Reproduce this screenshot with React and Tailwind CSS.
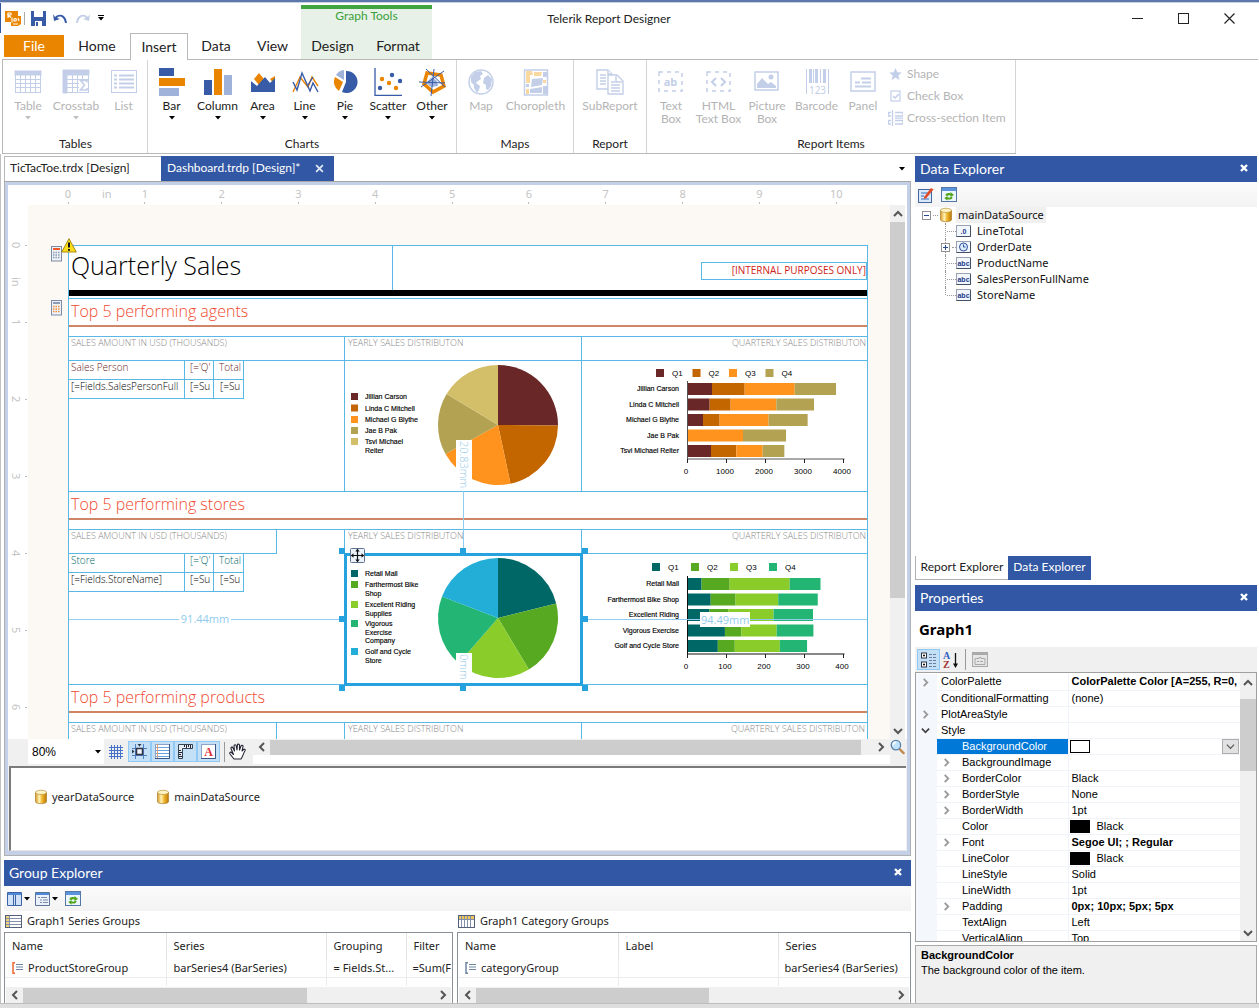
import React from "react";

const UI = "font-['Lato','Noto_Sans',sans-serif]";
const SEGOE = "font-['Noto_Sans',sans-serif]";
const LIGHT = "font-['Open_Sans','Noto_Sans',sans-serif] font-light";
const SANS = "font-['Liberation_Sans',Arial,sans-serif]";

/* ---------- small shared pieces ---------- */

function Caret({ className = "" }) {
  return (
    <svg width="6" height="4" viewBox="0 0 6 4" className={className} fill="currentColor" aria-hidden="true">
      <path d="M0 0h6L3 3.5z" />
    </svg>
  );
}

function Chevron({ dir = "right", className = "text-[#555]", size = 10 }) {
  const d = { right: "M3 1l4 4-4 4", left: "M7 1L3 5l4 4", up: "M1 7l4-4 4 4", down: "M1 3l4 4 4-4" }[dir];
  return (
    <svg width={size} height={size} viewBox="0 0 10 10" fill="none" stroke="currentColor" strokeWidth="2" className={className} aria-hidden="true">
      <path d={d} />
    </svg>
  );
}

function Cylinder({ className = "" }) {
  return (
    <svg width="12" height="16" viewBox="0 0 13 16" className={className} aria-hidden="true">
      <defs>
        <linearGradient id="gold" x1="0" x2="1">
          <stop offset="0" stopColor="#d99a22" />
          <stop offset=".35" stopColor="#fff3b8" />
          <stop offset=".6" stopColor="#f0b62c" />
          <stop offset="1" stopColor="#bb7808" />
        </linearGradient>
      </defs>
      <path d="M.5 3v10c0 3 12 3 12 0V3z" fill="url(#gold)" stroke="#a47620" strokeWidth=".7" />
      <ellipse cx="6.5" cy="3" rx="6" ry="2.3" fill="#fdf3c4" stroke="#b78a30" strokeWidth=".7" />
    </svg>
  );
}

function RefreshWindow() {
  return (
    <svg width="16" height="15" viewBox="0 0 16 15" aria-hidden="true">
      <rect x=".5" y=".5" width="15" height="14" fill="#eef6fd" stroke="#5577a8" />
      <rect x="1" y="1" width="14" height="3" fill="#5b93dc" />
      <path d="M4.500 8.500c0-2.500 3-3 5-2V5L13 8l-3.500 2V8.600C8 8 7 8.200 6.800 9z" fill="#4fa51c" />
      <path d="M11.500 10c0 2.500-3 3-5 2.200v1.500L3.300 11l3.200-2.100v1.400c1.500.6 2.900.4 3.200-.5z" fill="#4fa51c" />
    </svg>
  );
}

function CloseX({ size = 8, className = "text-white", width = 2.4 }) {
  return (
    <svg width={size} height={size} viewBox="0 0 8 8" stroke="currentColor" strokeWidth={width} className={className} aria-hidden="true">
      <path d="M1 1l6 6M7 1L1 7" />
    </svg>
  );
}

function PanelHeader({ title }) {
  return (
    <header className={`${UI} flex h-[26px] shrink-0 items-center justify-between bg-[#3257a4] pr-[9px] pb-[2px] pl-[5px] text-[14px] text-white`}>
      <h2>{title}</h2>
      <button aria-label={`Close ${title}`}><CloseX /></button>
    </header>
  );
}

/* ---------- ribbon icons ---------- */

const B = "#385ba8";
const O = "#ea8500";
const L = "#9fb2d9";
const D = "#c3cfe8";

const icons = {
  table: (
    <g fill="none" stroke={D}>
      <rect x="1.500" y="3.500" width="25" height="21" />
      <rect x="1" y="3" width="26" height="4" fill={D} />
      <path d="M6.500 7v17M11.500 7v17M16.500 7v17M21.500 7v17M2 11.500h24M2 15.500h24M2 19.500h24" />
    </g>
  ),
  crosstab: (
    <g fill="none" stroke={D}>
      <rect x="1.500" y="2.500" width="25" height="22" />
      <path d="M1 2h26v5H1zM1 7h4v18H1z" fill={D} />
      <path d="M10.500 7v17M15.500 7v17M20.500 7v4M5 11.500h21M5 15.500h12M5 19.500h12" />
      <path d="M25 14.500v-2H18.500l4 4.500-4 5H25v-2" strokeWidth="1.600" />
    </g>
  ),
  list: (
    <g stroke={D} fill="none">
      <rect x="1.500" y="2.500" width="25" height="22" />
      <path d="M4 7.500h3M9 7.500h15M4 11.500h3M9 11.500h15M4 15.500h3M9 15.500h15M4 19.500h3M9 19.500h15" strokeWidth="2" />
    </g>
  ),
  bar: (
    <g>
      <path fill={B} d="M1 0h15v8H1z" />
      <path fill={O} d="M1 10h26v8H1z" />
      <path fill={L} d="M1 20h20v8H1z" />
    </g>
  ),
  column: (
    <g>
      <path fill={B} d="M0 12h8v15H0z" />
      <path fill={O} d="M10 1h8v26h-8z" />
      <path fill={L} d="M20 7h8v20h-8z" />
    </g>
  ),
  area: (
    <g>
      <path fill={O} d="M5 11l5-6 5 6-5 6zM21 11l5-3v9z" />
      <path fill={B} d="M2 13l6 5 8-9 5 6 5-5v14H2z" />
    </g>
  ),
  line: (
    <g fill="none" strokeWidth="1.400">
      <path stroke={O} d="M2 24L9 9l8 10 4-10 6 9" />
      <path stroke={B} d="M2 14l4 8L11 5l8 18 3-8 5 9" />
      <path stroke={B} d="M17 17l5-8" />
    </g>
  ),
  pie: (
    <g>
      <path fill={B} d="M15 3a11 11 0 11-4 21L15 14z" />
      <path fill={L} d="M13 2v10L5 7a11 11 0 018-5z" />
      <path fill={O} d="M4 9l8 5-4 9A11 11 0 014 9z" />
    </g>
  ),
  scatter: (
    <g>
      <path d="M1 0v27.500h27" fill="none" stroke={B} strokeWidth="1.300" />
      <g fill={B}><circle cx="18" cy="7" r="2.200" /><circle cx="6" cy="20" r="2.200" /><circle cx="26" cy="13" r="2.200" /></g>
      <g fill={O}><circle cx="8" cy="11" r="2.200" /><circle cx="15" cy="15" r="2.200" /><circle cx="22" cy="20" r="2.200" /></g>
    </g>
  ),
  other: (
    <g>
      <path fill="none" stroke={O} strokeWidth="3.500" d="M9 5l14 2 3 11-11 6-9-8z" />
      <path fill={L} d="M14 9l5 4 1 5-7 1-5-4z" />
      <path stroke={B} fill="none" d="M8 1l19 18M26 3L3 19M1 14l26 1M13 28l3-27" />
    </g>
  ),
  map: (
    <g>
      <circle cx="14" cy="14" r="12" fill="#fff" stroke={D} strokeWidth="1.500" />
      <path fill={D} d="M4 9l4-5 6-1 2 3-3 2 1 3-3 2-2 2 4 3-1 4-2 3-3-5v-3l-3-3zM17 10l4-3 4 4-1 7-3 4-2-1v-4l-3-2z" />
    </g>
  ),
  choropleth: (
    <g>
      <rect x="2.500" y="2" width="23" height="25" fill="#fff" stroke={D} strokeWidth="1.500" />
      <path fill="#f9d9a0" d="M4 3h6l1 4H8v8H4zM12 4h8l-1 4h-7zM4 21h3v5H4zM21 12h3v3h-3z" />
      <path fill={D} d="M10 11l11-1-1 7-11 2zM8 21l12-2v6H8zM21 4h4v5h-4zM21 18h4v8h-4zM4 16h3v3H4z" />
    </g>
  ),
  subreport: (
    <g fill="#fff" stroke={D} strokeWidth="1.400">
      <path d="M1 2h11l4 4v15H1z" />
      <path d="M12 2v4h4M4 7h6M4 10h6M4 13h6M4 16h6" />
      <path d="M12 7h9l6 6v13H12z" />
      <path d="M20 8v6h6M15 14h4M15 17h9M15 20h9M15 23h9" />
    </g>
  ),
  textbox: (
    <g>
      <rect x="2" y="4" width="23" height="19" fill="none" stroke={D} strokeWidth="1.500" strokeDasharray="4 4" />
      <text x="13.500" y="18" textAnchor="middle" fontSize="11" fontWeight="700" fill={D} fontFamily="Noto Sans">ab</text>
    </g>
  ),
  html: (
    <g fill="none" stroke={D}>
      <rect x="2" y="4" width="23" height="19" strokeWidth="1.500" strokeDasharray="4 4" />
      <path strokeWidth="2" d="M11 10l-4 4 4 4M16 10l4 4-4 4" />
    </g>
  ),
  picture: (
    <g fill={D}>
      <rect x="2" y="4" width="23" height="18" fill="#fff" stroke={D} strokeWidth="1.500" />
      <path d="M4 20v-4l5-6 6 6 3-2 5 4v2z" />
      <circle cx="18" cy="9" r="2.500" />
    </g>
  ),
  barcode: (
    <g fill={D}>
      <path d="M3 1h1v25H3zM6 1h3v14H6zM10 1h1v14h-1zM12 1h3v14h-3zM17 1h1v14h-1zM20 1h3v14h-3zM25 1h1v25h-1z" />
      <text x="14.500" y="26" textAnchor="middle" fontSize="10" fontFamily="Noto Sans">123</text>
    </g>
  ),
  panel: (
    <g fill="none" stroke={D}>
      <rect x="2" y="4" width="24" height="19" strokeWidth="1.500" />
      <path strokeWidth="2" d="M12 10.500h10M6 14.500h5M13 14.500h9M6 18.500h16" />
    </g>
  ),
};

function RibbonItem({ icon, label, width, caret, disabled }) {
  return (
    <button
      disabled={disabled}
      className={`${width} flex shrink-0 flex-col items-center text-[12px] leading-[13px] ${disabled ? "text-[#b4b4b4]" : "text-[#222]"}`}
    >
      <svg width="28" height="28" viewBox="0 0 28 28" aria-hidden="true">{icons[icon]}</svg>
      <span className="mt-[3px] whitespace-pre-line">{label}</span>
      {caret && <Caret className={`mt-[4px] ${disabled ? "text-[#c0c0c0]" : "text-black"}`} />}
    </button>
  );
}

function RibbonGroup({ title, children, className = "" }) {
  return (
    <section className={`flex flex-col border-r border-[#d4d4d4] ${className}`}>
      <div className="flex grow pt-[8px]">{children}</div>
      <h3 className="pb-[2px] text-center text-[12px] leading-[14px] text-[#222]">{title}</h3>
    </section>
  );
}

function Ribbon() {
  return (
    <div className={`${UI} mr-[1px] ml-[2px] flex h-[95px] shrink-0 border-t border-l border-[#b8b8b8]`}>
      <div className="flex border-b border-[#b8b8b8]">
        <RibbonGroup title="Tables" className="w-[145px] pl-px">
          <RibbonItem icon="table" label="Table" width="w-[48px]" caret disabled />
          <RibbonItem icon="crosstab" label="Crosstab" width="w-[48px]" caret disabled />
          <RibbonItem icon="list" label="List" width="w-[47px]" disabled />
        </RibbonGroup>
        <RibbonGroup title="Charts" className="w-[309px]">
          <RibbonItem icon="bar" label="Bar" width="w-[47px]" caret />
          <RibbonItem icon="column" label="Column" width="w-[45px]" caret />
          <RibbonItem icon="area" label="Area" width="w-[45px]" caret />
          <RibbonItem icon="line" label="Line" width="w-[39px]" caret />
          <RibbonItem icon="pie" label="Pie" width="w-[42px]" caret />
          <RibbonItem icon="scatter" label="Scatter" width="w-[44px]" caret />
          <RibbonItem icon="other" label="Other" width="w-[44px]" caret />
        </RibbonGroup>
        <RibbonGroup title="Maps" className="w-[117px]">
          <RibbonItem icon="map" label="Map" width="w-[48px]" disabled />
          <RibbonItem icon="choropleth" label="Choropleth" width="w-[61px]" disabled />
        </RibbonGroup>
        <RibbonGroup title="Report" className="w-[73px]">
          <RibbonItem icon="subreport" label="SubReport" width="w-[72px]" disabled />
        </RibbonGroup>
        <RibbonGroup title="Report Items" className="w-[369px]">
          <RibbonItem icon="textbox" label={"Text\nBox"} width="w-[48px]" disabled />
          <RibbonItem icon="html" label={"HTML\nText Box"} width="w-[47px]" disabled />
          <RibbonItem icon="picture" label={"Picture\nBox"} width="w-[50px]" disabled />
          <RibbonItem icon="barcode" label="Barcode" width="w-[49px]" disabled />
          <RibbonItem icon="panel" label="Panel" width="w-[44px]" disabled />
          <div className="-mt-[2px] flex flex-col gap-[6px] pl-[3px] text-[12px] text-[#b4b4b4]">
            <button disabled className="flex h-[16px] items-center gap-[4px]">
              <svg width="15" height="14" viewBox="0 0 15 14" fill={D} aria-hidden="true"><path d="M7.500 1l1.800 4.300 4.500.3-3.500 3 1.200 4.400-4-2.400-4 2.400 1.200-4.400-3.500-3 4.500-.3z" /></svg>
              Shape
            </button>
            <button disabled className="flex h-[16px] items-center gap-[4px]">
              <svg width="15" height="12" viewBox="0 0 15 12" fill="none" stroke={D} aria-hidden="true"><rect x="3" y="1" width="9" height="10" strokeWidth="1.200" /><path strokeWidth="1.500" d="M5 6l2 2 4-4" /></svg>
              Check Box
            </button>
            <button disabled className="flex h-[16px] items-center gap-[4px]">
              <svg width="15" height="16" viewBox="0 0 15 16" fill="none" stroke={D} strokeWidth="1.300" aria-hidden="true"><path d="M4.500 0v16M3 2.500H.5V6H3M3 10.500H.5V14H3M7 2.500h8V6H7M7 10.500h8V14H7M7 8.200h8" /></svg>
              Cross-section Item
            </button>
          </div>
        </RibbonGroup>
      </div>
    </div>
  );
}

function TitleBar() {
  const tab = "flex h-[26px] items-center justify-center pb-[2px] text-[14px] text-[#222]";
  return (
    <div className={`${UI} relative flex shrink-0 flex-col`}>
      <div className="flex h-[30px] items-center border-l border-[#3257a4] pl-[4px]">
        <svg width="17" height="17" viewBox="0 0 17 17" aria-hidden="true">
          <path fill={O} d="M0 1h13v5h3v8l-3 2H6v-4H0z" />
          <path fill="none" stroke="#fff" strokeWidth="1.100" d="M3 8V3h2.500c1 0 1 2 0 2H3l3 2.500M7 7.500v5M9 11v-2c2-1 3 0 2 2zM13 8l1 3M8 14h5" />
        </svg>
        <span className="mx-[2px] h-[13px] w-px bg-[#aaa]" />
        <button aria-label="Save" className="ml-[4px]">
          <svg width="15" height="15" viewBox="0 0 15 15" aria-hidden="true">
            <path fill={B} d="M0 0h15v15H0z" /><path fill="#fff" d="M3 0h9v6H3zM4 10h7v5H4z" /><path fill={B} d="M5 11h2v4H5z" />
          </svg>
        </button>
        <button aria-label="Undo" className="ml-[7px]">
          <svg width="15" height="11" viewBox="0 0 15 11" aria-hidden="true"><path fill={B} d="M0 1l1 7 6-2-3-1c3-3 7-1 8 5h2C13 1 6 0 2 4z" /></svg>
        </button>
        <button aria-label="Redo" className="ml-[7px]">
          <svg width="15" height="11" viewBox="0 0 15 11" aria-hidden="true"><path fill={D} d="M15 1l-1 7-6-2 3-1C8 2 4 4 3 10H1C2 1 9 0 13 4z" /></svg>
        </button>
        <button aria-label="Customize quick access toolbar" className="ml-[8px] flex flex-col items-center gap-[1px]">
          <span className="h-px w-[6px] bg-black" />
          <Caret />
        </button>
        <h1 className="absolute inset-x-0 top-[9px] pr-[41px] text-center text-[12px] leading-[14px] text-[#222]">Telerik Report Designer</h1>
        <div className="ml-auto flex items-center gap-[35px] pr-[24px]">
          <button aria-label="Minimize"><svg width="11" height="11" aria-hidden="true"><path d="M0 5.500h11" stroke="#222" /></svg></button>
          <button aria-label="Maximize"><svg width="11" height="11" fill="none" aria-hidden="true"><rect x=".5" y=".5" width="10" height="10" stroke="#222" /></svg></button>
          <button aria-label="Close"><svg width="11" height="11" aria-hidden="true"><path d="M.5.5l10 10M10.500.5l-10 10" stroke="#222" strokeWidth="1.200" /></svg></button>
        </div>
      </div>
      <nav className="flex items-end pl-[4px]">
        <button className="mb-[2px] flex h-[22px] w-[60px] items-center justify-center bg-[#ea8500] pb-[2px] text-[14px] text-white">File</button>
        <button className={`${tab} w-[66px]`}>Home</button>
        <button className={`${tab} -mb-px h-[27px] w-[58px] border border-b-0 border-[#b8b8b8] bg-white`}>Insert</button>
        <button className={`${tab} w-[56px]`}>Data</button>
        <button className={`${tab} w-[57px]`}>View</button>
        <div className="-mt-[28px] flex w-[131px] flex-col border-t-4 border-[#40a540] bg-[#e7f1e7]">
          <span className="h-[24px] text-center text-[12px] leading-[14px] text-[#3a9f3a]">Graph Tools</span>
          <div className="flex">
            <button className={`${tab} w-[63px]`}>Design</button>
            <button className={`${tab} w-[68px]`}>Format</button>
          </div>
        </div>
      </nav>
    </div>
  );
}

/* ---------- charts ---------- */

const WARM = ["#692727", "#c46600", "#ff931e", "#b2a252", "#d3bf69"];
const FRESH = ["#006767", "#58a922", "#8acc2a", "#22b573", "#22aed6"];

function slice(cx, cy, r, a, b) {
  const p = (t) => {
    const rad = ((t - 90) * Math.PI) / 180;
    return `${cx + r * Math.cos(rad)} ${cy + r * Math.sin(rad)}`;
  };
  return `M${cx} ${cy}L${p(a)}A${r} ${r} 0 ${b - a > 180 ? 1 : 0} 1 ${p(b)}Z`;
}

function PieChart({ angles, colors, legend, label, labelTop, labelHeight }) {
  return (
    <svg width="236" height="130" viewBox="0 0 236 130" className={`${SANS} block`} role="img" aria-label={label}>
      {colors.map((c, i) => (
        <path key={c} d={slice(153, 64, 60, angles[i], angles[i + 1])} fill={c} />
      ))}
      {legend.map(([y, ...lines], i) => (
        <g key={i} fontSize="7" fill="#000" stroke="#000" strokeWidth=".15">
          <rect x="6" y={y - 4} width="7" height="7" fill={colors[i]} stroke="none" />
          {lines.map((t, j) => <text key={t} x="20" y={y + 2 + j * 8.5}>{t}</text>)}
        </g>
      ))}
      <rect x="111" y={labelTop} width="16" height={labelHeight} fill="#fff" />
      <text className={LIGHT} fontSize="11" fill="#8fc8ea" transform={`translate(115 ${labelTop + 1}) rotate(90)`}>{label}</text>
    </svg>
  );
}

function BarChart({ rows, colors, unit, ticks, legendX, legendGap, legendY, top, axisColor, name }) {
  const base = 105;
  const first = top + 12;
  return (
    <svg width="286" height="130" viewBox="0 0 286 130" className={`${SANS} block`} role="img" aria-label={name}>
      {colors.map((c, i) => (
        <g key={c}>
          <rect x={legendX + i * legendGap} y={legendY - 4} width="8" height="8" fill={c} />
          <text x={legendX + 16 + i * legendGap} y={legendY + 3} fontSize="8">{`Q${i + 1}`}</text>
        </g>
      ))}
      {rows.map(([label, ...vals], r) => {
        let x = base;
        const y = first + r * 15.5;
        return (
          <g key={label}>
            <text x="97" y={y + 8} textAnchor="end" fontSize="7" stroke="#000" strokeWidth=".15">{label}</text>
            {vals.map((v, i) => {
              const at = x;
              x += v * unit;
              return <rect key={i} x={at} y={y} width={v * unit} height="12" fill={colors[i]} />;
            })}
          </g>
        );
      })}
      <path d={`M${base + 0.5} ${first - 2}v78h157`} fill="none" stroke={axisColor} />
      {ticks.map((t, i) => (
        <g key={t}>
          <path d={`M${base + 0.5 + i * 39} ${first + 76}v4`} stroke="#222" />
          <text x={base - 1 + i * 39} y={first + 91} textAnchor="middle" fontSize="8">{t}</text>
        </g>
      ))}
    </svg>
  );
}

/* ---------- report surface ---------- */

const LINE = "border-[#5ab8e6]";

function FieldTable({ head, field, tone }) {
  const cell = `border ${LINE} whitespace-nowrap p-0 h-[19px] align-top leading-[13px] font-light`;
  return (
    <table className={`-mt-px -ml-px w-[176px] table-fixed border-collapse text-[10px] ${LIGHT}`}>
      <tbody>
        <tr className={tone}>
          <th className={`${cell} w-[116px] pl-[2px] text-left`}>{head}</th>
          <th className={`${cell} w-[29px] pl-[5px] text-left`}>[='Q'</th>
          <th className={`${cell} w-[30px] pl-[5px] text-left`}>Total</th>
        </tr>
        <tr className="text-black">
          <td className={`${cell} pl-[2px]`}>{field}</td>
          <td className={`${cell} pl-[5px]`}>[=Su</td>
          <td className={`${cell} pl-[6px]`}>[=Su</td>
        </tr>
      </tbody>
    </table>
  );
}

function ReportSection({ title, narrow, table, pie, bars }) {
  const caption = `h-[24px] border-b ${LINE} text-[9px] leading-[12px] text-[#888]`;
  return (
    <section className={`border-t ${LINE}`}>
      <div className="h-[37px]">
        <h3 className="h-[28px] border-b-2 border-[#cf8666] pl-[2px] text-[16px] leading-[25px] text-[#f04a30]">{title}</h3>
      </div>
      <div className={`grid grid-cols-[276px_237px_1fr] border-t ${LINE}`}>
        <div className={`h-[154px] border-r ${LINE}`}>
          <div className={`${caption} pl-[2px] ${narrow ? "w-[208px] border-r" : ""}`}>SALES AMOUNT IN USD (THOUSANDS)</div>
          {table}
        </div>
        <div className={`h-[154px] border-r ${LINE}`}>
          <div className={`${caption} pl-[3px]`}>YEARLY SALES DISTRIBUTON</div>
          {pie}
        </div>
        <div className="h-[154px]">
          <div className={`${caption} pr-[2px] text-right`}>QUARTERLY SALES DISTRIBUTON</div>
          {bars}
        </div>
      </div>
    </section>
  );
}

function CalcIcon({ tone, className }) {
  return (
    <svg width="11" height="16" viewBox="0 0 11 16" className={className} aria-hidden="true">
      <rect x=".5" y=".5" width="10" height="14.500" fill="#eef2f9" stroke="#7c8aa5" />
      <rect x="2" y="2" width="7" height="2" fill={tone} />
      <path d="M2 6.500h7M2 9h7M2 11.500h7" stroke={tone === "#ef5a28" ? "#8d9bb5" : "#f2913d"} strokeWidth="1.500" strokeDasharray="1.500 1" />
    </svg>
  );
}

const HANDLES = [
  "-top-[8px] -left-[8px]", "-top-[8px] left-[113px]", "-top-[8px] -right-[8px]",
  "top-[60px] -left-[8px]", "top-[60px] -right-[8px]",
  "-bottom-[8px] -left-[8px]", "-bottom-[8px] left-[113px]", "-bottom-[8px] -right-[8px]",
];

function SelectionOverlay() {
  return (
    <>
      <div className="absolute top-[245px] left-[394px] h-[58px] w-px bg-[#8fcdee]" />
      <div className="absolute top-[367px] left-0 flex w-[272px] items-center">
        <span className="h-px grow bg-[#8fcdee]" />
        <span className="px-[2px] text-[11px] leading-[12px] font-normal text-[#8fcbee]">91.44mm</span>
        <span className="h-px grow bg-[#8fcdee]" />
      </div>
      <div className="absolute top-[366px] right-0 flex h-[15px] w-[282px] items-center">
        <span className="h-px w-[115px] bg-[#8fcdee]" />
        <span className="bg-white px-[1px] text-[11px] leading-[15px] font-normal text-[#8fcbee]">94.49mm</span>
        <span className="h-px grow bg-[#8fcdee]" />
      </div>
      <div className="absolute top-[307px] left-[275px] h-[133px] w-[239px] border-3 border-[#28a2de]">
        {HANDLES.map((h) => <span key={h} className={`absolute size-[6px] bg-[#28a2de] ${h}`} />)}
        <svg width="15" height="15" viewBox="0 0 15 15" className="absolute -top-[8px] left-[3px]" aria-hidden="true">
          <rect x=".5" y=".5" width="14" height="14" rx="1" fill="#eef3fb" stroke="#5e7390" />
          <path d="M7.500 1.500v12M1.500 7.500h12" stroke="#111" strokeWidth="1.200" />
          <path d="M7.500.8l2.200 2.700H5.300zM7.500 14.200l2.200-2.700H5.300zM.8 7.500l2.700-2.200v4.400zM14.200 7.500l-2.700-2.200v4.400z" fill="#111" />
        </svg>
      </div>
    </>
  );
}

function ReportPage() {
  return (
    <div className={`${LIGHT} relative ml-[40px] mt-[40px] w-[800px] border-x border-t ${LINE} bg-white`}>
      <CalcIcon tone="#ef5a28" className="absolute top-0 -left-[18px]" />
      <CalcIcon tone="#8d9bb5" className="absolute top-[54px] -left-[18px]" />
      <svg width="16" height="15" viewBox="0 0 16 15" className="absolute -top-[8px] -left-[8px]" aria-hidden="true">
        <path d="M8 .7L15.300 14H.7z" fill="#fbdc1e" stroke="#a58a10" strokeLinejoin="round" />
        <path d="M8 4.500v5M8 11v1.800" stroke="#111" strokeWidth="2" />
      </svg>
      <div className="flex h-[44px] items-start justify-between">
        <h2 className={`h-full w-[324px] border-r ${LINE} pl-[2px] text-[25px] leading-[38px] text-black`}>Quarterly Sales</h2>
        <div className={`mt-[16px] h-[18px] w-[166px] border ${LINE} text-right text-[10px] leading-[14px] font-normal text-[#cf2318]`}>[INTERNAL PURPOSES ONLY]</div>
      </div>
      <div className="mb-[2px] h-[6px] bg-black" />
      <ReportSection
        title="Top 5 performing agents"
        table={<FieldTable head="Sales Person" field="[=Fields.SalesPersonFull" tone="text-[#692727]" />}
        pie={
          <PieChart
            label="20.83mm"
            labelTop={79}
            labelHeight={45}
            colors={WARM}
            angles={[0, 90.5, 168, 241, 301, 360]}
            legend={[[36, "Jillian Carson"], [47.5, "Linda C Mitchell"], [59, "Michael G Blythe"], [70, "Jae B Pak"], [81, "Tsvi Michael", "Reiter"]]}
          />
        }
        bars={
          <BarChart
            name="Quarterly sales by agent"
            colors={WARM.slice(0, 4)}
            unit={0.039}
            ticks={[0, 1000, 2000, 3000, 4000]}
            legendX={74}
            legendGap={36.5}
            legendY={12}
            top={10}
            axisColor="#555"
            rows={[
              ["Jillian Carson", 641, 838, 1282, 1060],
              ["Linda C Mitchell", 581, 538, 1171, 966],
              ["Michael G Blythe", 410, 427, 1256, 1000],
              ["Jae B Pak", 0, 0, 1436, 1103],
              ["Tsvi Michael Reiter", 615, 650, 675, 556],
            ]}
          />
        }
      />
      <ReportSection
        title="Top 5 performing stores"
        narrow
        table={<FieldTable head="Store" field="[=Fields.StoreName]" tone="text-[#006767]" />}
        pie={
          <PieChart
            label="0mm"
            labelTop={99}
            labelHeight={27}
            colors={FRESH}
            angles={[0, 76, 149, 221, 291, 360]}
            legend={[[20, "Retail Mall"], [31, "Farthermost Bike", "Shop"], [51, "Excellent Riding", "Supplies"], [70, "Vigorous", "Exercise", "Company"], [98, "Golf and Cycle", "Store"]]}
          />
        }
        bars={
          <BarChart
            name="Quarterly sales by store"
            colors={FRESH.slice(0, 4)}
            unit={0.395}
            ticks={[0, 100, 200, 300, 400]}
            legendX={70}
            legendGap={39}
            legendY={13}
            top={12}
            axisColor="#111"
            rows={[
              ["Retail Mall", 37, 71, 152, 78],
              ["Farthermost Bike Shop", 60, 63, 108, 100],
              ["Excellent Riding", 57, 48, 114, 100],
              ["Vigorous Exercise", 96, 42, 89, 93],
              ["Golf and Cycle Store", 78, 43, 114, 69],
            ]}
          />
        }
      />
      <ReportSection title="Top 5 performing products" narrow />
      <SelectionOverlay />
    </div>
  );
}

function RulerTop() {
  return (
    <div className={`${SEGOE} h-[20px] shrink-0 overflow-hidden pl-[60px] text-[11px] text-[#c4c4c4]`}>
      <div className="grid w-[845px] grid-cols-11">
        {[0, 1, 2, 3, 4, 5, 6, 7, 8, 9, 10].map((n) => (
          <div key={n} className="flex">
            <div className="flex w-[16px] -translate-x-1/2 flex-col items-center">
              <span className="h-[17px] leading-[18px]">{n}</span>
              <span className="h-[2px] w-px bg-[#bbb]" />
            </div>
            {n === 0 && <span className="ml-[18px] leading-[18px]">in</span>}
          </div>
        ))}
      </div>
    </div>
  );
}

function RulerLeft() {
  return (
    <div className={`${SEGOE} w-[20px] shrink-0 overflow-hidden pt-[40px] text-[11px] text-[#c4c4c4]`}>
      {[0, 1, 2, 3, 4, 5, 6].map((n) => (
        <div key={n} className="flex h-[77px] flex-col">
          <div className="flex h-[16px] -translate-y-1/2 items-center">
            <span className="w-[17px] leading-[18px] [writing-mode:vertical-rl]">{n}</span>
            <span className="h-px w-[2px] bg-[#bbb]" />
          </div>
          {n === 0 && <span className="mt-[16px] w-[17px] leading-[18px] [writing-mode:vertical-rl]">in</span>}
        </div>
      ))}
    </div>
  );
}

function CanvasToolbar() {
  const on = "flex h-[21px] w-[23px] items-center justify-center border border-[#90c8f6] bg-[#c3e0f7]";
  return (
    <div className="flex h-[26px] shrink-0 items-start bg-[#f0f0f0] pl-[20px]">
      <div className={`${SANS} flex h-[25px] w-[76px] items-center bg-white pr-[3px] text-[12px]`}>
        <select aria-label="Zoom" defaultValue="80%" className="h-[24px] grow appearance-none bg-transparent pl-[4px] leading-[24px] outline-none">
          <option>80%</option>
        </select>
        <Caret />
      </div>
      <div className="flex grow items-center pt-[2px] pl-[5px]">
        <button aria-label="Show grid" className="w-[19px]">
          <svg width="14" height="14" viewBox="0 0 14 14" stroke="#4472c4" aria-hidden="true"><path d="M2.500 0v14M5.500 0v14M8.500 0v14M11.500 0v14M0 2.500h14M0 5.500h14M0 8.500h14M0 11.500h14" /></svg>
        </button>
        <button aria-label="Snap to grid" className={on}>
          <svg width="15" height="15" viewBox="0 0 15 15" fill="none" aria-hidden="true"><path d="M3.500 0v15M11.500 0v15M0 4.500h15M0 11.500h15" stroke="#4f7fc4" /><rect x="4.500" y="4.500" width="6" height="6" fill="#eef5fc" stroke="#334" strokeWidth="1.500" /><path d="M5.500 0h4l-2 2.500zM0 5.500v4l2.500-2z" fill="#334" /></svg>
        </button>
        <button aria-label="Snap lines" className={on}>
          <svg width="15" height="15" viewBox="0 0 15 15" aria-hidden="true"><rect x=".5" y=".5" width="14" height="14" fill="#fff" stroke="#8ba3c8" /><path d="M1 3.500h13M1 6.500h13M1 9.500h13M1 12.500h13" stroke="#6aa2dc" /><path d="M2.500 0v15" stroke="#e8a070" /><path d="M14.500 0v14.500H0" stroke="#3a5488" fill="none" /></svg>
        </button>
        <button aria-label="Rulers" className={on}>
          <svg width="15" height="15" viewBox="0 0 15 15" aria-hidden="true"><path d="M.5.5h14v4h-10v10h-4z" fill="#e8edf5" stroke="#345" /><path d="M6.500 1v2M8.500 1v3M10.500 1v2M12.500 1v3M1 6.500h2M1 8.500h3M1 10.500h2M1 12.500h3" stroke="#223" /></svg>
        </button>
        <button aria-label="Text preview" className={on}>
          <svg width="15" height="15" viewBox="0 0 15 15" aria-hidden="true"><rect x=".5" y=".5" width="14" height="14" fill="#fff" stroke="#8ba3c8" /><path d="M14.500 0v14.500H0" stroke="#3a5488" fill="none" /><text x="7.500" y="12" textAnchor="middle" fontFamily="Liberation Serif" fontWeight="700" fontSize="12" fill="#e0303a">A</text></svg>
        </button>
        <span className="mx-[4px] h-[20px] w-px bg-[#999]" />
        <button aria-label="Pan">
          <svg width="17" height="17" viewBox="0 0 17 17" fill="#fff" stroke="#223" strokeWidth="1.100" strokeLinejoin="round" aria-hidden="true"><path d="M5 16l-4-5c-1-2 1-2.500 2-1l1.500 1.500L2 5.500C1.600 4 3.500 3.500 4 5l1.500 3L5 3c0-1.600 2-1.600 2.200-.2L8 7l.4-5C8.500.8 10.400.8 10.500 2.200L10.500 7l1.500-4c.5-1.300 2.200-.8 2 .6L13 8l1.500-1.500c1-.9 2.100.1 1.500 1.300C14.500 10 14 13 12 16z" /></svg>
        </button>
      </div>
      <div className="flex h-[25px] w-[637px] flex-col bg-white">
        <div className="flex h-[16px] items-center bg-[#f0f0f0]">
          <span className="flex w-[17px] justify-center"><Chevron dir="left" /></span>
          <span className="h-[15px] grow bg-[#cdcdcd]" />
          <span className="flex w-[29px] justify-end pr-[4px]"><Chevron /></span>
        </div>
      </div>
      <button aria-label="Zoom tool" className="pr-[2px]">
        <svg width="15" height="16" viewBox="0 0 16 16" aria-hidden="true"><path d="M10 10l4.500 4.500" stroke="#c08a50" strokeWidth="2.500" strokeLinecap="round" /><circle cx="6.300" cy="6" r="5" fill="#bfe3fa" stroke="#5c7fa6" strokeWidth="1.400" /><path d="M3.500 6a3 3 0 013-3" stroke="#fff" strokeWidth="1.500" fill="none" /></svg>
      </button>
    </div>
  );
}

function DocumentArea() {
  return (
    <div className="flex min-h-0 grow flex-col">
      <div className={`${UI} flex h-[26px] shrink-0 border-b border-[#a6a6a6] text-[12px]`}>
        <button className="w-[157px] border-t border-l border-[#b8b8b8] pb-[2px] pl-[5px] text-left text-[#222]">TicTacToe.trdx [Design]</button>
        <div className="flex w-[173px] items-center justify-between bg-[#3257a4] pr-[10px] pl-[6px] text-white">
          <button className="pb-[2px]">Dashboard.trdp [Design]*</button>
          <button aria-label="Close Dashboard.trdp"><CloseX size={9} className="text-[#dfe6f5]" width={1.600} /></button>
        </div>
        <button aria-label="Open documents" className="ml-auto pr-[6px]"><Caret /></button>
      </div>
      <div className="flex min-h-0 grow flex-col border border-t-0 border-[#b0b0b0]">
        <div className="flex min-h-0 grow flex-col border-3 border-b-4 border-[#c4cfe8] bg-white">
          <RulerTop />
          <div className="flex min-h-0 grow">
            <RulerLeft />
            <div className="min-w-0 grow overflow-hidden bg-[#fcf8f3]"><ReportPage /></div>
            <div className="flex w-[15px] shrink-0 flex-col items-center bg-[#f0f0f0]">
              <span className="flex h-[17px] items-center"><Chevron dir="up" /></span>
              <span className="w-full grow-[377] bg-[#cdcdcd]" />
              <span className="grow-[124]" />
              <span className="flex h-[17px] items-center"><Chevron dir="down" /></span>
            </div>
            <div className="w-[2px] shrink-0 bg-white" />
          </div>
          <CanvasToolbar />
          <div className="shrink-0 bg-[#f0f0f0] px-[1px] pt-px">
            <ul className={`${SEGOE} flex h-[85px] gap-[23px] border-t-2 border-l-2 border-[#7b7b7b] border-b border-b-[#e4e4e4] bg-white pt-[21px] pl-[24px] text-[11px] text-[#222]`}>
              <li className="flex h-[16px] items-center gap-[5px]"><Cylinder />yearDataSource</li>
              <li className="flex h-[16px] items-center gap-[5px]"><Cylinder />mainDataSource</li>
            </ul>
          </div>
        </div>
      </div>
    </div>
  );
}

/* ---------- group explorer ---------- */

function GroupTable({ grow, title, icon, columns, row, accent, thumb }) {
  return (
    <section className={`${grow} flex min-w-0 flex-col`}>
      <h3 className="flex h-[21px] items-center gap-[5px] text-[11px] text-[#222]">{icon}{title}</h3>
      <div className="flex h-[71px] flex-col overflow-hidden border border-b-0 border-[#8a8f99]">
        <table className="w-full table-fixed border-collapse text-[11px] text-[#222]">
          <thead>
            <tr>
              {columns.map(([name, width]) => (
                <th key={name} className={`${width} h-[26px] border-r border-[#e2e2e2] pl-[7px] text-left font-normal last:border-r-0`}>{name}</th>
              ))}
            </tr>
          </thead>
          <tbody>
            <tr>
              {row.map((v, i) => (
                <td key={i} className="h-[18px] overflow-hidden border-r border-b border-[#ececec] p-0 pl-[7px] leading-[16px] whitespace-nowrap last:border-r-0 last:pl-[6px]">
                  {i === 0 ? (
                    <span className="flex items-center gap-[5px]">
                      <svg width="11" height="12" viewBox="0 0 11 12" fill="none" aria-hidden="true">
                        <path d="M3 .8H1v10.400h2" stroke={accent} strokeWidth="1.500" />
                        <path d="M4 2.500h7M4 5h7M4 7.500h7" stroke="#6d87a3" />
                      </svg>
                      {v}
                    </span>
                  ) : v}
                </td>
              ))}
            </tr>
            <tr>{row.map((_, i) => <td key={i} className="h-[9px] border-r border-[#ececec] last:border-r-0" />)}</tr>
          </tbody>
        </table>
        <div className="mx-px mt-auto flex h-[16px] shrink-0 items-center bg-[#f0f0f0]">
          <span className="flex w-[17px] justify-center"><Chevron dir="left" /></span>
          <span className="grow"><span className={`block h-[15px] bg-[#cdcdcd] ${thumb}`} /></span>
          <span className="flex w-[17px] justify-center"><Chevron /></span>
        </div>
      </div>
    </section>
  );
}

function GroupExplorer() {
  return (
    <section className={`${SEGOE} mt-[4px] shrink-0`}>
      <PanelHeader title="Group Explorer" />
      <div className="flex h-[25px] items-center bg-linear-to-b from-[#fbfbfb] to-[#f3f3f3] pl-[3px]">
        <button aria-label="Add group" className="flex items-center gap-[2px]">
          <svg width="15" height="14" viewBox="0 0 15 14" aria-hidden="true"><path d="M.5.5h14v13H.5z" fill="#cfe2f8" stroke="#3c63a5" /><path d="M1 1h13v2H1z" fill="#4f88d4" /><path d="M6.500 3v11M8.500 3v11" stroke="#3c63a5" /></svg>
          <Caret />
        </button>
        <button aria-label="Group options" className="ml-[5px] flex items-center gap-[2px]">
          <svg width="15" height="14" viewBox="0 0 15 14" aria-hidden="true"><path d="M.5.5h14v13H.5z" fill="#eaf1fa" stroke="#5b7399" /><path d="M1 1h13v2H1z" fill="#4f88d4" /><path d="M3 5.500h2M5 8h2M5 10.500h2M6 5.500h6M8 8h5M8 10.500h5" stroke="#7d8da8" /></svg>
          <Caret />
        </button>
        <button aria-label="Refresh" className="ml-[7px]"><RefreshWindow /></button>
      </div>
      <div className="flex gap-[4px]">
        <GroupTable
          grow="flex-[449]"
          title="Graph1 Series Groups"
          accent="#ee6a35"
          thumb="w-[69%]"
          icon={<svg width="17" height="14" viewBox="0 0 17 14" className="ml-px" aria-hidden="true"><rect x=".5" y=".5" width="16" height="12" fill="#fff" stroke="#55607a" /><path d="M1 1h3v11H1z" fill="#f3d27c" /><path d="M1 3.500h15M1 6.500h15M1 9.500h15M4.500 1v11" stroke="#8390aa" /></svg>}
          columns={[["Name", "w-[161px]"], ["Series", "w-[160px]"], ["Grouping", "w-[80px]"], ["Filter", "w-auto"]]}
          row={["ProductStoreGroup", "barSeries4 (BarSeries)", "= Fields.St...", "=Sum(F"]}
        />
        <GroupTable
          grow="flex-[454]"
          title="Graph1 Category Groups"
          accent="#6d87a3"
          thumb="w-[56%]"
          icon={<svg width="17" height="14" viewBox="0 0 17 14" className="ml-px" aria-hidden="true"><rect x=".5" y=".5" width="16" height="12" fill="#fff" stroke="#55607a" /><path d="M1 1h15v3H1z" fill="#f0c45c" /><path d="M3.500 1v11M6.500 1v11M9.500 1v11M12.500 1v11M1 4.500h15" stroke="#8390aa" /></svg>}
          columns={[["Name", "w-[160px]"], ["Label", "w-[160px]"], ["Series", "w-auto"]]}
          row={["categoryGroup", "", "barSeries4 (BarSeries)"]}
        />
      </div>
    </section>
  );
}

/* ---------- right-hand panels ---------- */

function FieldGlyph({ kind }) {
  return (
    <svg width="15" height="12" viewBox="0 0 15 12" aria-hidden="true">
      <rect x=".5" y=".5" width="14" height="11" fill="#f2f6fd" stroke="#9aa3b5" />
      <path d="M.5 11.500h14V1" fill="none" stroke="#454f66" />
      {kind === "date" ? (
        <g fill="#dcebfb" stroke="#2e4f9c"><circle cx="7.500" cy="6" r="4" /><path d="M7.500 3.500V6h2" /></g>
      ) : (
        <text x="7.500" y="9" textAnchor="middle" fontFamily="Liberation Sans" fontWeight="700" fontSize="7" fill="#1f3a8a">{kind}</text>
      )}
    </svg>
  );
}

function Toggle({ open }) {
  return (
    <button aria-label={open ? "Collapse" : "Expand"} className="z-10 bg-white">
      <svg width="9" height="9" viewBox="0 0 9 9" aria-hidden="true"><rect x=".5" y=".5" width="8" height="8" fill="#fff" stroke="#919191" /><path d={open ? "M2 4.500h5" : "M2 4.500h5M4.500 2v5"} stroke="#2b4a94" /></svg>
    </button>
  );
}

function DataExplorer() {
  const fields = [[".0", "LineTotal"], ["date", "OrderDate"], ["abc", "ProductName"], ["abc", "SalesPersonFullName"], ["abc", "StoreName"]];
  return (
    <section className="flex min-h-0 grow flex-col">
      <PanelHeader title="Data Explorer" />
      <div className="flex h-[25px] shrink-0 items-center gap-[7px] bg-linear-to-b from-[#fbfbfb] to-[#f3f3f3] pl-[3px]">
        <button aria-label="Edit data source">
          <svg width="16" height="16" viewBox="0 0 16 16" aria-hidden="true"><rect x=".5" y="2.500" width="13" height="13" fill="#d9e9fb" stroke="#44679f" /><path d="M3 6h7M3 9h3M3 12h8" stroke="#3a6ab8" /><path d="M6 10l7-9 2.500 1.500L8.500 11 6 12z" fill="#e04b28" /></svg>
        </button>
        <button aria-label="Refresh data"><RefreshWindow /></button>
      </div>
      <div className={`${SEGOE} text-[11px] leading-[16px] text-[#111]`}>
        <div className="flex h-[16px] items-center pl-[7px]">
          <Toggle open />
          <span className="mr-[2px] ml-[2px] w-[5px] border-t border-dotted border-[#999]" />
          <Cylinder />
          <span className="ml-[4px] bg-[#f0f0f0] px-[2px]">mainDataSource</span>
        </div>
        <ul>
          {fields.map(([kind, name], i) => (
            <li key={name} className="flex h-[16px] items-center pl-[26px]">
              <span className={`-mr-[5px] ml-[4px] w-px self-start border-l border-dotted border-[#999] ${i === 4 ? "h-[8px]" : "h-[16px]"}`} />
              {kind === "date" ? <Toggle /> : <span className="w-[4px]" />}
              <span className={`border-t border-dotted border-[#999] ${kind === "date" ? "ml-[2px] w-[4px]" : "ml-[2px] w-[9px]"}`} />
              <FieldGlyph kind={kind} />
              <span className="ml-[6px]">{name}</span>
            </li>
          ))}
        </ul>
      </div>
      <div className={`${UI} mt-auto flex h-[24px] shrink-0 text-[12px]`}>
        <button className="w-[93px] border-b border-l border-[#b0b0b0] pb-[2px] text-[#222]">Report Explorer</button>
        <button className="w-[83px] bg-[#3257a4] pb-[2px] text-white">Data Explorer</button>
      </div>
    </section>
  );
}

const PROPS = [
  { name: "ColorPalette", value: "ColorPalette Color [A=255, R=0,", arrow: "right", bold: true },
  { name: "ConditionalFormatting", value: "(none)" },
  { name: "PlotAreaStyle", arrow: "right" },
  { name: "Style", arrow: "down" },
  { name: "BackgroundColor", child: true, swatch: "bg-white", selected: true },
  { name: "BackgroundImage", child: true, arrow: "right" },
  { name: "BorderColor", child: true, arrow: "right", value: "Black" },
  { name: "BorderStyle", child: true, arrow: "right", value: "None" },
  { name: "BorderWidth", child: true, arrow: "right", value: "1pt" },
  { name: "Color", child: true, swatch: "bg-black", value: "Black" },
  { name: "Font", child: true, arrow: "right", value: "Segoe UI; ; Regular", bold: true },
  { name: "LineColor", child: true, swatch: "bg-black", value: "Black" },
  { name: "LineStyle", child: true, value: "Solid" },
  { name: "LineWidth", child: true, value: "1pt" },
  { name: "Padding", child: true, arrow: "right", value: "0px; 10px; 5px; 5px", bold: true },
  { name: "TextAlign", child: true, value: "Left" },
  { name: "VerticalAlign", child: true, value: "Top" },
];

function Expander({ dir }) {
  return (
    <button aria-label={dir === "down" ? "Collapse" : "Expand"} className="flex">
      <Chevron dir={dir} size={9} className={dir === "down" ? "text-[#444]" : "text-[#9a9a9a]"} />
    </button>
  );
}

function PropertyRow({ name, value, arrow, bold, child, swatch, selected }) {
  return (
    <tr className="h-[16px]">
      <td className="w-[21px] bg-[#f4f7fc] p-0 pl-[5px]">{!child && arrow && <Expander dir={arrow} />}</td>
      <th scope="row" className={`w-[131px] border-r border-b border-[#f0f3f9] p-0 text-left font-normal ${selected ? "bg-[#0078d7] text-white" : ""}`}>
        <span className={`flex h-[15px] items-center ${child ? "" : "pl-[4px]"}`}>
          {child && <span className="w-[25px] pl-[5px]">{arrow && <Expander dir={arrow} />}</span>}
          {name}
        </span>
      </th>
      <td className={`border-b border-[#f0f3f9] p-0 whitespace-nowrap ${bold ? "font-bold" : ""}`}>
        <span className="flex h-[15px] items-center pl-[1px]">
          {swatch && <span className={`mr-[7px] h-[13px] w-[20px] shrink-0 border border-black ${swatch}`} />}
          <span className={swatch ? "" : "pl-[2px]"}>{value}</span>
          {selected && (
            <button aria-label="Choose color" className="mr-px ml-auto flex h-[15px] w-[17px] items-center justify-center border border-[#adadad] bg-[#e1e1e1]">
              <svg width="9" height="9" viewBox="0 0 10 10" fill="none" stroke="#555" strokeWidth="1.300" aria-hidden="true"><path d="M1 3l4 4 4-4" /></svg>
            </button>
          )}
        </span>
      </td>
    </tr>
  );
}

function Properties() {
  return (
    <section className="mt-[5px] flex shrink-0 flex-col">
      <PanelHeader title="Properties" />
      <h3 className={`${SEGOE} h-[36px] pl-[4px] text-[15px] leading-[37px] font-bold`}>Graph1</h3>
      <div className="flex h-[25px] items-center bg-[#f0f0f0] pl-[2px]">
        <button aria-label="Categorized" className="flex h-[21px] w-[23px] items-center justify-center border border-[#90c8f6] bg-[#c3e0f7]">
          <svg width="16" height="16" viewBox="0 0 16 16" fill="none" aria-hidden="true"><rect x=".5" y="1" width="5" height="5" fill="#fff" stroke="#334" /><rect x=".5" y="10" width="5" height="5" fill="#fff" stroke="#334" /><path d="M2 3.500h2M3 2.500v2M2 12.500h2M3 11.500v2" stroke="#111" /><path d="M8 2.500h3M12 2.500h3M8 5.500h3M12 5.500h3M8 8.500h3M12 8.500h3M8 11.500h3M12 11.500h3M8 14.500h3M12 14.500h3" stroke="#6d7f9a" /></svg>
        </button>
        <button aria-label="Alphabetical" className="ml-[2px]">
          <svg width="18" height="18" viewBox="0 0 18 18" aria-hidden="true">
            <g fontFamily="Liberation Serif" fontWeight="700" fontSize="10"><text x="1" y="8" fill="#2f5fc0">A</text><text x="1" y="17" fill="#a03030">Z</text></g>
            <path d="M13.500 2v12" stroke="#111" strokeWidth="1.300" /><path d="M11 12.500h5L13.500 17z" fill="#111" />
          </svg>
        </button>
        <span className="mr-[6px] ml-[5px] h-[21px] w-px bg-[#999]" />
        <button aria-label="Property pages" disabled>
          <svg width="16" height="15" viewBox="0 0 16 15" fill="none" stroke="#a9a9a9" aria-hidden="true"><rect x=".5" y=".5" width="15" height="14" fill="#e6e6e6" /><path d="M1 2h14" strokeWidth="2" /><path d="M3 6.500h4v-1h2v1h4v6H3zM5 9.500h2M8 9.500h3" /></svg>
        </button>
      </div>
      <div className={`${SANS} flex h-[270px] border border-[#a0a0a0] bg-white text-[11px] leading-[13px]`}>
        <div className="min-w-0 grow overflow-hidden pt-px">
          <table className="w-full table-fixed border-collapse text-black">
            <tbody>{PROPS.map((p) => <PropertyRow key={p.name} {...p} />)}</tbody>
          </table>
        </div>
        <div className="flex w-[16px] shrink-0 flex-col items-center bg-[#f0f0f0]">
          <span className="flex h-[26px] items-start pt-[5px]"><Chevron dir="up" /></span>
          <span className="h-[72px] w-full bg-[#cdcdcd]" />
          <span className="mt-auto pb-[3px]"><Chevron dir="down" /></span>
        </div>
      </div>
      <div className={`${SANS} mt-[3px] h-[58px] border border-b-0 border-[#a8a8a8] bg-[#f0f0f0] pt-[2px] pl-[5px] text-[11px] leading-[15px]`}>
        <h4 className="font-bold">BackgroundColor</h4>
        <p>The background color of the item.</p>
      </div>
    </section>
  );
}

export default function App() {
  return (
    <div className="flex h-screen min-w-[1100px] flex-col overflow-hidden bg-white">
      <div className="h-[3px] shrink-0 border-b border-[#c8d2e4] bg-[#5c77aa]" />
      <div className="flex min-h-0 grow flex-col">
        <TitleBar />
        <Ribbon />
        <main className="flex min-h-0 grow gap-[4px] border-l border-[#c0c0c0] pt-[2px] pr-[2px] pl-[3px]">
          <div className="flex min-w-0 grow flex-col">
            <DocumentArea />
            <GroupExplorer />
          </div>
          <aside className="flex w-[342px] shrink-0 flex-col">
            <DataExplorer />
            <Properties />
          </aside>
        </main>
      </div>
      <div className="h-[5px] shrink-0 border-t border-[#bdbdbd] bg-[#dedede]" />
    </div>
  );
}
